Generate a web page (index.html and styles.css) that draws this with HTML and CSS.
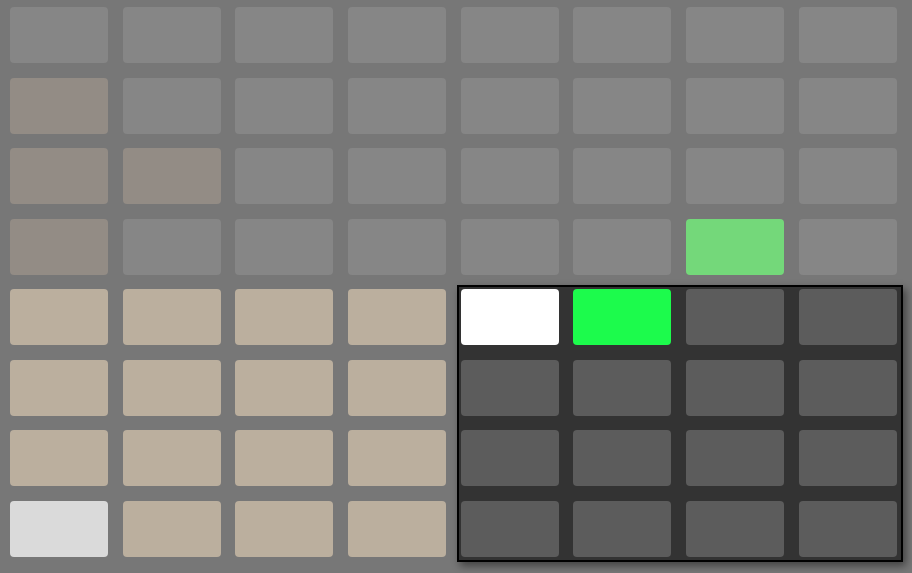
FILE: index.html
```html
<!DOCTYPE html>
<html lang="en">
<head>
    <meta charset="UTF-8">
    <meta name="viewport" content="width=device-width, initial-scale=1.0">
    <title>Pad Grid</title>
    <link rel="stylesheet" href="styles.css">
</head>
<body>

    <!-- 8x8 pad matrix -->
    <main class="pads">
        <!-- Row 1 -->
        <div class="pad"></div><div class="pad"></div><div class="pad"></div><div class="pad"></div>
        <div class="pad"></div><div class="pad"></div><div class="pad"></div><div class="pad"></div>
        <!-- Row 2 -->
        <div class="pad muted"></div><div class="pad"></div><div class="pad"></div><div class="pad"></div>
        <div class="pad"></div><div class="pad"></div><div class="pad"></div><div class="pad"></div>
        <!-- Row 3 -->
        <div class="pad muted"></div><div class="pad muted"></div><div class="pad"></div><div class="pad"></div>
        <div class="pad"></div><div class="pad"></div><div class="pad"></div><div class="pad"></div>
        <!-- Row 4 -->
        <div class="pad muted"></div><div class="pad"></div><div class="pad"></div><div class="pad"></div>
        <div class="pad"></div><div class="pad"></div><div class="pad lit"></div><div class="pad"></div>

        <!-- Rows 5-8, left half -->
        <div class="pad tan r5 c1"></div><div class="pad tan r5 c2"></div><div class="pad tan r5 c3"></div><div class="pad tan r5 c4"></div>
        <div class="pad tan r6 c1"></div><div class="pad tan r6 c2"></div><div class="pad tan r6 c3"></div><div class="pad tan r6 c4"></div>
        <div class="pad tan r7 c1"></div><div class="pad tan r7 c2"></div><div class="pad tan r7 c3"></div><div class="pad tan r7 c4"></div>
        <div class="pad pale r8 c1"></div><div class="pad tan r8 c2"></div><div class="pad tan r8 c3"></div><div class="pad tan r8 c4"></div>

        <!-- Selected 4x4 block -->
        <section class="focus">
            <div class="pad white"></div><div class="pad green"></div><div class="pad dark"></div><div class="pad dark"></div>
            <div class="pad dark"></div><div class="pad dark"></div><div class="pad dark"></div><div class="pad dark"></div>
            <div class="pad dark"></div><div class="pad dark"></div><div class="pad dark"></div><div class="pad dark"></div>
            <div class="pad dark"></div><div class="pad dark"></div><div class="pad dark"></div><div class="pad dark"></div>
        </section>
    </main>

</body>
</html>
```

FILE: styles.css
```css
html, body {
    margin: 0;
    padding: 0;
    height: 100%;
    background: #777777;
    overflow: hidden;
}

/* Pad matrix */
.pads {
    display: grid;
    grid-template-columns: repeat(8, 98px);
    grid-auto-rows: 56px;
    column-gap: 14.7px;
    row-gap: 14.5px;
    padding: 7px 0 0 10px;
}

.pad {
    border-radius: 4px;
    background: #868686;
}

.pad.muted { background: #938c85; }
.pad.lit   { background: #74d87a; }
.pad.tan   { background: #bbaf9e; }
.pad.pale  { background: #dadada; }

/* Row / column placement for the lower half */
.r5 { grid-row: 5; }
.r6 { grid-row: 6; }
.r7 { grid-row: 7; }
.r8 { grid-row: 8; }
.c1 { grid-column: 1; }
.c2 { grid-column: 2; }
.c3 { grid-column: 3; }
.c4 { grid-column: 4; }

/* Selected block */
.focus {
    grid-column: 5 / 9;
    grid-row: 5 / 9;
    margin: -4px -6px -5px -4px;
    padding: 2px 3px 2px 2px;
    border: 2px solid #000;
    background: #333333;
    box-shadow: 3px 4px 8px rgba(0, 0, 0, 0.45);
    display: grid;
    grid-template-columns: repeat(4, 98px);
    grid-auto-rows: 56px;
    column-gap: 14.7px;
    row-gap: 14.5px;
}

.pad.dark  { background: #5c5c5c; }
.pad.white { background: #ffffff; }
.pad.green { background: #1cfb4c; }
```
